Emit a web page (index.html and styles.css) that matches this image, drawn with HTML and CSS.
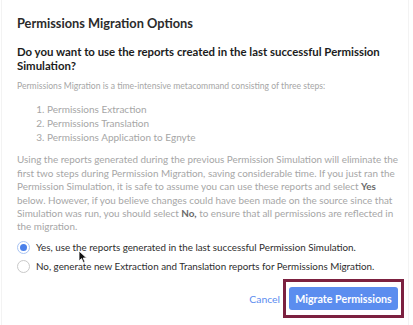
FILE: index.html
```html
<!DOCTYPE html>
<html>
<head>
    <meta charset="UTF-8">
    <title>Permissions Migration Options</title>
    <link rel="stylesheet" href="styles.css">
</head>
<body>
    <div class="dialog">
        <h1 class="title">Permissions Migration Options</h1>
        <h2 class="question">Do you want to use the reports created in the last successful Permission Simulation?</h2>
        <p class="intro">Permissions Migration is a time-intensive metacommand consisting of three steps:</p>
        <ol class="steps">
            <li>Permissions Extraction</li>
            <li>Permissions Translation</li>
            <li>Permissions Application to Egnyte</li>
        </ol>
        <p class="desc">Using the reports generated during the previous Permission Simulation will eliminate the first two steps during Permission Migration, saving considerable time. If you just ran the Permission Simulation, it is safe to assume you can use these reports and select <b>Yes</b> below. However, if you believe changes could have been made on the source since that Simulation was run, you should select <b>No,</b> to ensure that all permissions are reflected in the migration.</p>
        <div class="options">
            <label class="option">
                <span class="radio checked"></span>
                <span>Yes, use the reports generated in the last successful Permission Simulation.</span>
            </label>
            <label class="option">
                <span class="radio"></span>
                <span>No, generate new Extraction and Translation reports for Permissions Migration.</span>
            </label>
        </div>
        <div class="actions">
            <a class="cancel">Cancel</a>
            <div class="highlight">
                <button class="primary">Migrate Permissions</button>
            </div>
        </div>
        <!-- mouse pointer -->
        <svg class="pointer" width="10" height="14" viewBox="0 0 10 14">
            <path d="M1 1 L1 11 L3.5 8.6 L5.4 12.8 L7 12.1 L5.2 8 L8.6 8 Z" fill="#111" stroke="#fff" stroke-width="0.8"/>
        </svg>
    </div>
</body>
</html>
```

FILE: styles.css
```css
*{
    padding: 0;
    margin: 0;
    box-sizing: border-box;
}
body{
    background: #fff;
    font-family: Lato, "Liberation Sans", sans-serif;
    width: 413px;
    height: 325px;
    overflow: hidden;
}
.dialog{
    position: relative;
    height: 325px;
    padding: 14px 8px 0 15px;
    border-left: 1px solid #f3f3f3;
    border-right: 1px solid #f3f3f3;
    margin: 0 4px 0 1px;
}
.title{
    font-size: 12.8px;
    font-weight: 700;
    color: #2b2b2b;
    line-height: 18px;
}
.question{
    margin-top: 13px;
    font-size: 11.4px;
    font-weight: 700;
    color: #1c1c1c;
    line-height: 14px;
}
.intro{
    margin-top: 6.5px;
    font-size: 8.6px;
    line-height: 13px;
    color: #a6a6a6;
}
.steps{
    margin: 9.5px 0 0 30px;
    font-size: 10px;
    line-height: 14px;
    color: #a6a6a6;
}
.desc{
    margin-top: 9.3px;
    font-size: 9.9px;
    line-height: 13.4px;
    color: #a6a6a6;
}
.desc b{
    color: #6a6a6a;
}
.options{
    margin-top: 6.8px;
    display: flex;
    flex-direction: column;
    gap: 6px;
}
.option{
    display: flex;
    align-items: center;
    gap: 6px;
    font-size: 9.8px;
    color: #2e2e2e;
    line-height: 13px;
}
.radio{
    width: 13px;
    height: 13px;
    border-radius: 50%;
    border: 1px solid #c9c9c9;
    background: #fff;
    position: relative;
    flex-shrink: 0;
}
.radio.checked{
    border-color: #a9c4f3;
}
.radio.checked::after{
    content: "";
    position: absolute;
    left: 2px;
    top: 2px;
    width: 7px;
    height: 7px;
    border-radius: 50%;
    background: #4a80ea;
}
.actions{
    margin-top: 6.5px;
    display: flex;
    justify-content: flex-end;
    align-items: center;
    gap: 3px;
    margin-right: -4px;
}
.cancel{
    color: #5b8def;
    font-size: 10.4px;
    cursor: pointer;
}
.highlight{
    border: 3px solid #7c2140;
    padding: 5px 3px;
    background: #fff;
}
.primary{
    display: block;
    border: 0;
    border-radius: 3px;
    background: #5b8def;
    color: #fff;
    font-family: inherit;
    font-size: 10.7px;
    font-weight: 700;
    height: 23px;
    width: 109px;
}
.pointer{
    position: absolute;
    left: 76px;
    top: 250px;
}
```
